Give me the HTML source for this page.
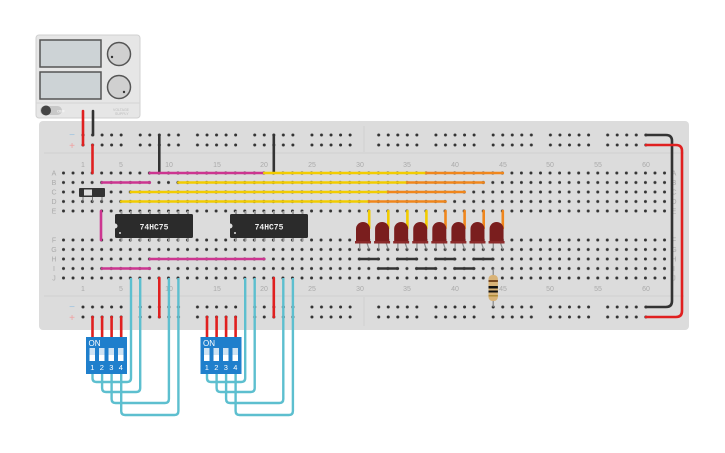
<!DOCTYPE html>
<html><head><meta charset="utf-8"><style>
html,body{margin:0;padding:0;background:#fff;width:725px;height:453px;overflow:hidden}
svg{display:block}
text{font-family:"Liberation Sans",sans-serif}
</style></head><body>
<svg width="725" height="453" viewBox="0 0 725 453" xmlns="http://www.w3.org/2000/svg">
<defs>
<pattern id="g" x="0" y="0" width="9.54" height="9.5" patternUnits="userSpaceOnUse"><circle cx="4.77" cy="4.75" r="1.5" fill="#333"/></pattern>
<pattern id="r" x="0" y="0" width="57.24" height="10" patternUnits="userSpaceOnUse">
<circle cx="4.77" cy="5" r="1.5" fill="#333"/><circle cx="14.31" cy="5" r="1.5" fill="#333"/><circle cx="23.85" cy="5" r="1.5" fill="#333"/><circle cx="33.39" cy="5" r="1.5" fill="#333"/><circle cx="42.93" cy="5" r="1.5" fill="#333"/></pattern>
</defs>

<!-- power supply -->
<rect x="36" y="35" width="104" height="83" rx="3" fill="#e6e6e6" stroke="#d0d0d0"/>
<line x1="36" y1="103" x2="140" y2="103" stroke="#d4d4d4"/>
<rect x="40" y="40" width="61" height="27" fill="#cdd3d6" stroke="#555" stroke-width="1.5"/>
<rect x="40" y="72" width="61" height="27" fill="#cdd3d6" stroke="#555" stroke-width="1.5"/>
<circle cx="119" cy="54" r="11.5" fill="#d0d0d0" stroke="#555" stroke-width="1.5"/>
<circle cx="119" cy="87" r="11.5" fill="#d0d0d0" stroke="#555" stroke-width="1.5"/>
<circle cx="112" cy="57" r="1.2" fill="#333"/><circle cx="124" cy="92" r="1.2" fill="#333"/>
<rect x="40" y="106" width="22" height="9" rx="4.5" fill="#c8c8c8"/>
<circle cx="46" cy="110.5" r="5" fill="#444"/>
<text x="57" y="112.5" font-size="4" fill="#fff">OFF</text>
<text x="113" y="111" font-size="3.5" fill="#bbb">VOLTAGE</text>
<text x="115" y="115" font-size="3.5" fill="#bbb">SUPPLY</text>

<!-- breadboard -->
<rect x="39" y="121" width="650" height="209" rx="4" fill="#dcdcdc"/>
<line x1="44" y1="153" x2="684" y2="153" stroke="#cfcfcf"/>
<line x1="44" y1="296" x2="684" y2="296" stroke="#cfcfcf"/>
<line x1="364" y1="126" x2="364" y2="152" stroke="#cfcfcf"/>
<line x1="364" y1="297" x2="364" y2="326" stroke="#cfcfcf"/>

<g transform="translate(58.73,168.25)"><rect width="610.6" height="47.5" fill="url(#g)"/></g>
<g transform="translate(58.73,235.25)"><rect width="610.6" height="47.5" fill="url(#g)"/></g>
<g transform="translate(78.23,130)"><rect width="286.2" height="20" fill="url(#r)"/></g>
<g transform="translate(373.93,130)"><rect width="286.2" height="20" fill="url(#r)"/></g>
<g transform="translate(78.23,302)"><rect width="286.2" height="20" fill="url(#r)"/></g>
<g transform="translate(373.93,302)"><rect width="286.2" height="20" fill="url(#r)"/></g>

<g font-size="7" fill="#aaa" text-anchor="middle">
<text x="72" y="138" fill="#9cc3e0" font-size="10">−</text><text x="72" y="149" fill="#f0a0a0" font-size="10">+</text>
<text x="72" y="310" fill="#9cc3e0" font-size="10">−</text><text x="72" y="321" fill="#f0a0a0" font-size="10">+</text>
<g>
<text x="83" y="167">1</text><text x="121" y="167">5</text><text x="169" y="167">10</text><text x="217" y="167">15</text><text x="264" y="167">20</text><text x="312" y="167">25</text><text x="360" y="167">30</text><text x="407" y="167">35</text><text x="455" y="167">40</text><text x="503" y="167">45</text><text x="550" y="167">50</text><text x="598" y="167">55</text><text x="646" y="167">60</text>
<text x="83" y="291">1</text><text x="121" y="291">5</text><text x="169" y="291">10</text><text x="217" y="291">15</text><text x="264" y="291">20</text><text x="312" y="291">25</text><text x="360" y="291">30</text><text x="407" y="291">35</text><text x="455" y="291">40</text><text x="503" y="291">45</text><text x="550" y="291">50</text><text x="598" y="291">55</text><text x="646" y="291">60</text>
</g>
<text x="54" y="175.5">A</text><text x="54" y="185">B</text><text x="54" y="194.5">C</text><text x="54" y="204">D</text><text x="54" y="213.5">E</text>
<text x="54" y="242.5">F</text><text x="54" y="252">G</text><text x="54" y="261.5">H</text><text x="54" y="271">I</text><text x="54" y="280.5">J</text>
<text x="674" y="175.5">A</text><text x="674" y="185">B</text><text x="674" y="194.5">C</text><text x="674" y="204">D</text><text x="674" y="213.5">E</text>
<text x="674" y="242.5">F</text><text x="674" y="252">G</text><text x="674" y="261.5">H</text><text x="674" y="271">I</text><text x="674" y="280.5">J</text>
</g>

<!-- wires -->
<g stroke-width="2.6" fill="none" stroke-linecap="round">
<line x1="83" y1="111" x2="83" y2="145" stroke="#e02020"/>
<line x1="93" y1="111" x2="93" y2="135" stroke="#333"/>
<line x1="92.5" y1="145" x2="92.5" y2="173" stroke="#e02020"/>
<line x1="159.3" y1="135" x2="159.3" y2="173" stroke="#333"/>
<line x1="273.8" y1="135" x2="273.8" y2="173" stroke="#333"/>

<line x1="149.8" y1="173" x2="264.3" y2="173" stroke="#cc3590"/>
<line x1="264.3" y1="173" x2="426.4" y2="173" stroke="#f2cc00"/>
<line x1="426.4" y1="173" x2="502.8" y2="173" stroke="#f0861c"/>
<line x1="102.1" y1="182.5" x2="149.8" y2="182.5" stroke="#cc3590"/>
<line x1="178.4" y1="182.5" x2="407.4" y2="182.5" stroke="#f2cc00"/>
<line x1="407.4" y1="182.5" x2="483.7" y2="182.5" stroke="#f0861c"/>
<line x1="130.7" y1="192" x2="388.3" y2="192" stroke="#f2cc00"/>
<line x1="388.3" y1="192" x2="464.6" y2="192" stroke="#f0861c"/>
<line x1="121.2" y1="201.5" x2="369.2" y2="201.5" stroke="#f2cc00"/>
<line x1="369.2" y1="201.5" x2="445.5" y2="201.5" stroke="#f0861c"/>
<line x1="101" y1="211" x2="101" y2="240" stroke="#cc3590"/>

<line x1="149.8" y1="259" x2="264.3" y2="259" stroke="#cc3590"/>
<line x1="102.1" y1="268.5" x2="149.8" y2="268.5" stroke="#cc3590"/>
<line x1="159.3" y1="278" x2="159.3" y2="317" stroke="#e02020"/>
<line x1="273.8" y1="278" x2="273.8" y2="317" stroke="#e02020"/>

<path d="M646 135 H666 Q672 135 672 141 V301 Q672 307 666 307 H646" stroke="#333"/>
<path d="M646 145 H676 Q682 145 682 151 V311 Q682 317 676 317 H646" stroke="#e02020"/>

<g stroke="#e02020">
<line x1="92.5" y1="317" x2="92.5" y2="338"/><line x1="102.1" y1="317" x2="102.1" y2="338"/><line x1="111.6" y1="317" x2="111.6" y2="338"/><line x1="121.2" y1="317" x2="121.2" y2="338"/>
<line x1="207" y1="317" x2="207" y2="338"/><line x1="216.6" y1="317" x2="216.6" y2="338"/><line x1="226.1" y1="317" x2="226.1" y2="338"/><line x1="235.6" y1="317" x2="235.6" y2="338"/>
</g>

<g stroke="#333">
<line x1="359.7" y1="259" x2="378.7" y2="259"/><line x1="397.8" y1="259" x2="416.9" y2="259"/><line x1="436" y1="259" x2="455.1" y2="259"/><line x1="474.1" y1="259" x2="493.2" y2="259"/>
<line x1="378.7" y1="268.5" x2="397.8" y2="268.5"/><line x1="416.9" y1="268.5" x2="436" y2="268.5"/><line x1="455.1" y1="268.5" x2="474.1" y2="268.5"/>
</g>

<g stroke="#f2cc00"><line x1="369.2" y1="211" x2="369.2" y2="228"/><line x1="388.3" y1="211" x2="388.3" y2="228"/><line x1="407.4" y1="211" x2="407.4" y2="228"/><line x1="426.4" y1="211" x2="426.4" y2="228"/></g>
<g stroke="#f0861c"><line x1="445.5" y1="211" x2="445.5" y2="228"/><line x1="464.6" y1="211" x2="464.6" y2="228"/><line x1="483.7" y1="211" x2="483.7" y2="228"/><line x1="502.8" y1="211" x2="502.8" y2="228"/></g>
</g>

<!-- slide switch -->
<rect x="79" y="188" width="26" height="9" rx="1" fill="#333"/>
<rect x="84" y="189.5" width="8" height="6" fill="#ddd"/>
<g stroke="#777" stroke-width="1"><line x1="83" y1="197" x2="83" y2="202"/><line x1="92.5" y1="197" x2="92.5" y2="202"/><line x1="102" y1="197" x2="102" y2="202"/></g>

<!-- chips -->
<g fill="#999">
<g id="pins">
<rect x="120.5" y="211" width="2" height="4"/><rect x="130" y="211" width="2" height="4"/><rect x="139.5" y="211" width="2" height="4"/><rect x="149" y="211" width="2" height="4"/><rect x="158.5" y="211" width="2" height="4"/><rect x="168" y="211" width="2" height="4"/><rect x="177.5" y="211" width="2" height="4"/><rect x="187" y="211" width="2" height="4"/>
<rect x="120.5" y="237" width="2" height="4"/><rect x="130" y="237" width="2" height="4"/><rect x="139.5" y="237" width="2" height="4"/><rect x="149" y="237" width="2" height="4"/><rect x="158.5" y="237" width="2" height="4"/><rect x="168" y="237" width="2" height="4"/><rect x="177.5" y="237" width="2" height="4"/><rect x="187" y="237" width="2" height="4"/>
</g>
<use href="#pins" x="114.5"/>
</g>
<rect x="115" y="214" width="78" height="24" rx="1.5" fill="#2b2b2b"/>
<rect x="230" y="214" width="78" height="24" rx="1.5" fill="#2b2b2b"/>
<circle cx="115" cy="226" r="2.5" fill="#dcdcdc"/><circle cx="230" cy="226" r="2.5" fill="#dcdcdc"/>
<circle cx="120" cy="233" r="1" fill="#ddd"/><circle cx="235" cy="233" r="1" fill="#ddd"/>
<text x="154" y="229.5" font-size="8" fill="#eee" text-anchor="middle" style="font-family:'Liberation Mono',monospace;font-weight:bold">74HC75</text>
<text x="269" y="229.5" font-size="8" fill="#eee" text-anchor="middle" style="font-family:'Liberation Mono',monospace;font-weight:bold">74HC75</text>

<!-- LEDs -->
<g id="led">
<g stroke="#888" stroke-width="1.2"><line x1="359.7" y1="240" x2="359.7" y2="249.5"/><line x1="366" y1="240" x2="369.2" y2="249.5"/></g>
<path d="M356 243 V229 A7 7 0 0 1 370 229 V243 Z" fill="#7a1e1e"/>
<rect x="355" y="241" width="16" height="2.5" fill="#8a2a2a"/>
</g>
<use href="#led" x="19.08"/><use href="#led" x="38.16"/><use href="#led" x="57.24"/><use href="#led" x="76.32"/><use href="#led" x="95.4"/><use href="#led" x="114.48"/><use href="#led" x="133.56"/>

<!-- resistor -->
<line x1="493.2" y1="268.5" x2="493.2" y2="307" stroke="#888" stroke-width="1.2"/>
<rect x="488.5" y="275" width="9.4" height="26" rx="4" fill="#d9b377"/>
<rect x="488.5" y="280" width="9.4" height="2" fill="#7a4a20"/>
<rect x="488.5" y="286" width="9.4" height="2.5" fill="#111"/>
<rect x="488.5" y="290.5" width="9.4" height="2" fill="#111"/>
<rect x="488.5" y="295" width="9.4" height="1.5" fill="#b08d3a"/>

<!-- cyan wires -->
<g fill="none" stroke="#5dbfcf" stroke-width="2.4">
<path d="M92.5 372 V378 Q92.5 382 96.5 382 H127 Q131 382 131 378 V278"/>
<path d="M102.1 372 V388 Q102.1 392 106 392 H136 Q140.2 392 140.2 388 V278"/>
<path d="M111.6 372 V399 Q111.6 403 115.6 403 H164.9 Q168.9 403 168.9 399 V278"/>
<path d="M121.2 372 V411 Q121.2 415 125.2 415 H174.4 Q178.4 415 178.4 411 V278"/>
<path d="M207 372 V378 Q207 382 211 382 H241 Q245.2 382 245.2 378 V278"/>
<path d="M216.6 372 V388 Q216.6 392 220.6 392 H250.7 Q254.7 392 254.7 388 V278"/>
<path d="M226.1 372 V399 Q226.1 403 230.1 403 H279.3 Q283.3 403 283.3 399 V278"/>
<path d="M235.6 372 V411 Q235.6 415 239.6 415 H288.9 Q292.9 415 292.9 411 V278"/>
</g>

<!-- DIP switches -->
<g id="dip">
<rect x="86" y="337" width="41" height="37" fill="#1f7fcc"/>
<text x="88.5" y="346" font-size="8" fill="#fff">ON</text>
<rect x="89.5" y="348" width="5.5" height="13" fill="#cfe3f3"/><rect x="89.5" y="355" width="5.5" height="6" fill="#fff"/>
<rect x="99" y="348" width="5.5" height="13" fill="#cfe3f3"/><rect x="99" y="355" width="5.5" height="6" fill="#fff"/>
<rect x="108.5" y="348" width="5.5" height="13" fill="#cfe3f3"/><rect x="108.5" y="355" width="5.5" height="6" fill="#fff"/>
<rect x="118" y="348" width="5.5" height="13" fill="#cfe3f3"/><rect x="118" y="355" width="5.5" height="6" fill="#fff"/>
<text x="92.3" y="370" font-size="7.5" fill="#fff" text-anchor="middle">1</text>
<text x="101.8" y="370" font-size="7.5" fill="#fff" text-anchor="middle">2</text>
<text x="111.3" y="370" font-size="7.5" fill="#fff" text-anchor="middle">3</text>
<text x="120.8" y="370" font-size="7.5" fill="#fff" text-anchor="middle">4</text>
</g>
<use href="#dip" x="114.5"/>
</svg>
</body></html>
